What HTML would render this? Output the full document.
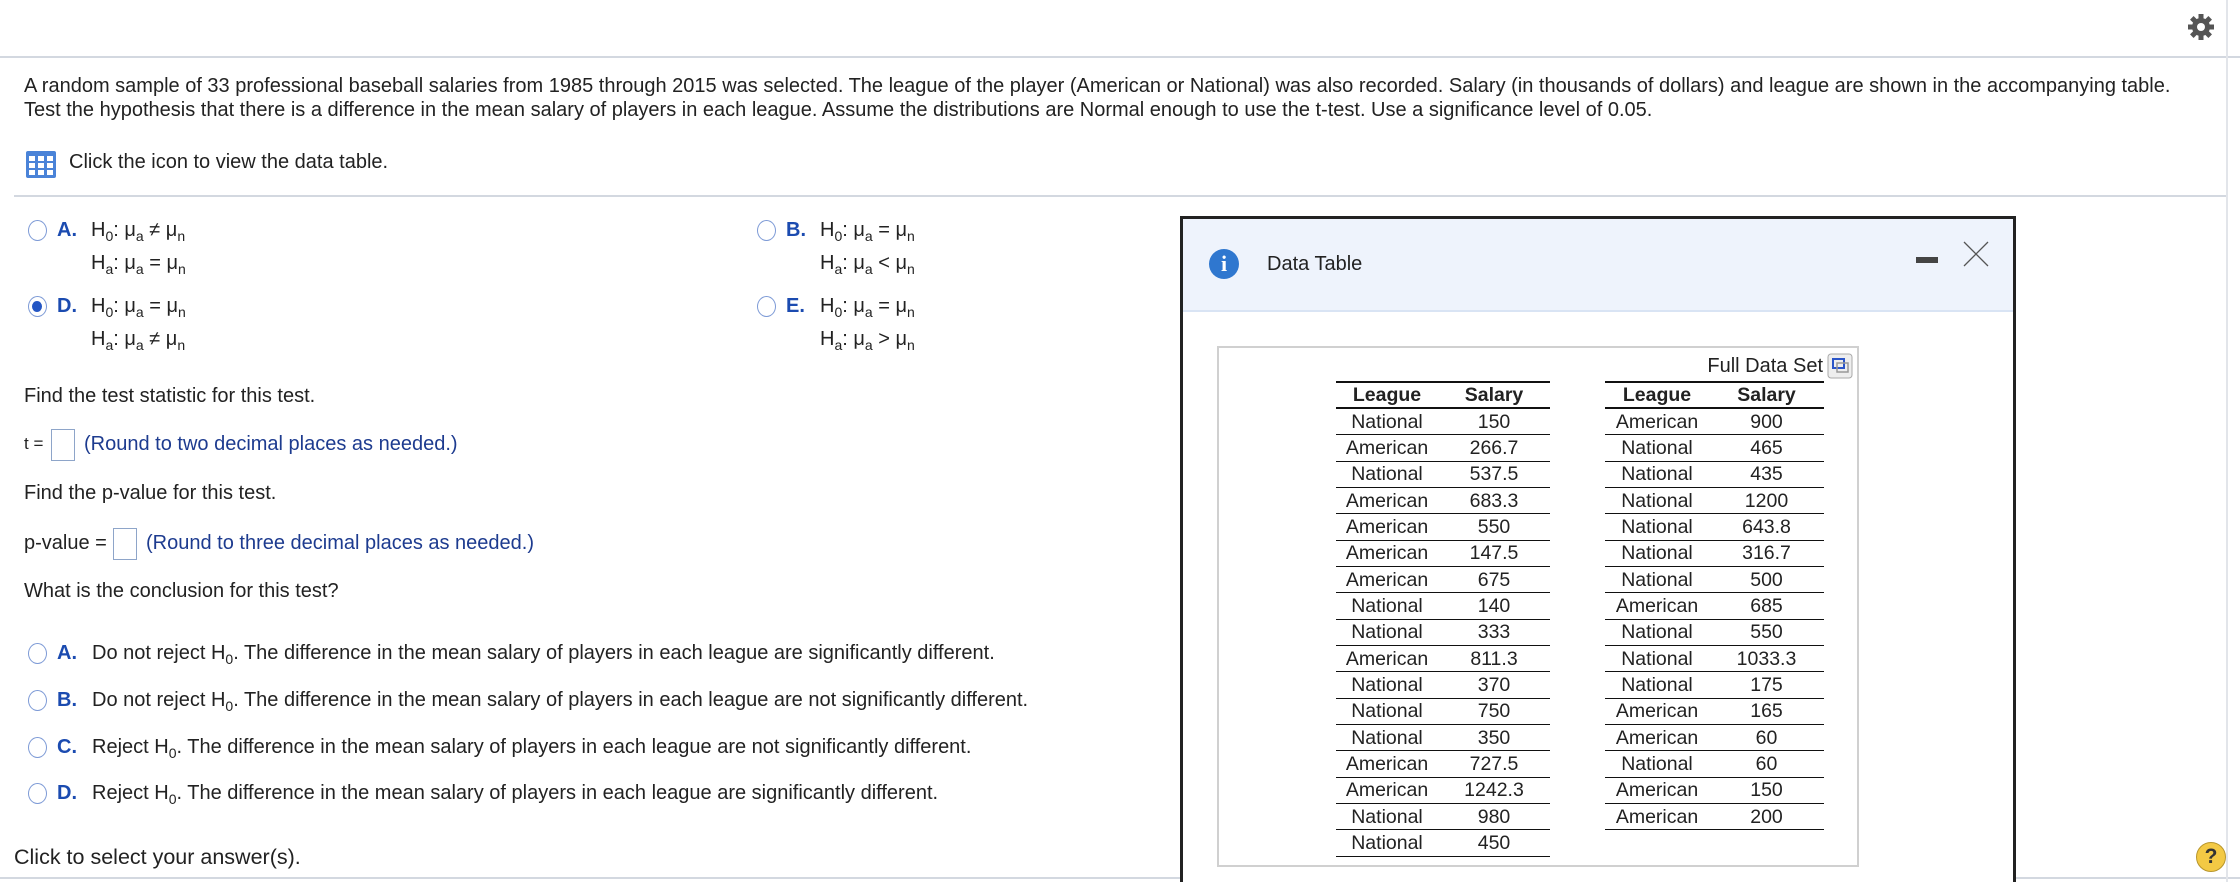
<!DOCTYPE html>
<html><head><meta charset="utf-8"><style>
*{margin:0;padding:0;box-sizing:border-box}
html{width:2240px;height:882px;overflow:hidden}
body{width:2240px;height:882px;overflow:hidden;background:#fff;font-family:"Liberation Sans",sans-serif;color:#222;position:relative}
.a{position:absolute;white-space:nowrap;font-size:20px;line-height:24px}
.hr{position:absolute;height:2px;background:#d3d8e0}
.r{position:absolute;width:19px;height:21px;border:1.5px solid #7d9ad6;border-radius:50%}
.r.sel::after{content:"";position:absolute;left:3px;top:3.5px;width:10px;height:11px;border-radius:50%;background:#2456c4}
.L{color:#1b4bb0;font-weight:bold}
sub{font-size:14px;vertical-align:-5px;line-height:0}
.hy{font-size:20px}
.blue{color:#1d3b8f}
.box{position:absolute;width:24px;height:32px;border:1.5px solid #8ea5c9}
table{position:absolute;border-collapse:collapse;font-size:19.5px;text-align:center}
td,th{height:26.35px;border-bottom:1.5px solid #111;padding:0;line-height:24px}
th{border-top:2px solid #111;border-bottom:2px solid #111;font-weight:bold}
</style></head><body>
<svg style="position:absolute;left:2186px;top:12px" width="30" height="30" viewBox="0 0 30 30"><g fill="#555"><circle cx="15" cy="15" r="9"/><rect x="12.5" y="2" width="5" height="26"/><rect x="2" y="12.5" width="26" height="5"/><rect x="12.5" y="2" width="5" height="26" transform="rotate(45 15 15)"/><rect x="12.5" y="2" width="5" height="26" transform="rotate(-45 15 15)"/></g><circle cx="15" cy="15" r="4" fill="#fff"/></svg>
<div class="hr" style="left:0;top:56px;width:2240px"></div>
<div class="a" style="left:24px;top:74px">A random sample of 33 professional baseball salaries from 1985 through 2015 was selected. The league of the player (American or National) was also recorded. Salary (in thousands of dollars) and league are shown in the accompanying table.</div>
<div class="a" style="left:24px;top:98px">Test the hypothesis that there is a difference in the mean salary of players in each league. Assume the distributions are Normal enough to use the t-test. Use a significance level of 0.05.</div>
<svg style="position:absolute;left:26px;top:151px" width="30" height="27" viewBox="0 0 30 27"><rect width="30" height="27" rx="2" fill="#4a83d8"/><g fill="#fff"><rect x="3" y="5" width="6" height="5"/><rect x="12" y="5" width="6" height="5"/><rect x="21" y="5" width="6" height="5"/><rect x="3" y="12" width="6" height="5"/><rect x="12" y="12" width="6" height="5"/><rect x="21" y="12" width="6" height="5"/><rect x="3" y="19" width="6" height="5"/><rect x="12" y="19" width="6" height="5"/><rect x="21" y="19" width="6" height="5"/></g></svg>
<div class="a" style="left:69px;top:150px">Click the icon to view the data table.</div>
<div class="hr" style="left:14px;top:195px;width:2212px"></div>

<div class="r" style="left:28px;top:220px"></div><div class="a L" style="left:57px;top:218px">A.</div>
<div class="a hy" style="left:91px;top:218px">H<sub>0</sub>: μ<sub>a</sub> ≠ μ<sub>n</sub></div>
<div class="a hy" style="left:91px;top:251px">H<sub>a</sub>: μ<sub>a</sub> = μ<sub>n</sub></div>
<div class="r sel" style="left:28px;top:296px"></div><div class="a L" style="left:57px;top:294px">D.</div>
<div class="a hy" style="left:91px;top:294px">H<sub>0</sub>: μ<sub>a</sub> = μ<sub>n</sub></div>
<div class="a hy" style="left:91px;top:327px">H<sub>a</sub>: μ<sub>a</sub> ≠ μ<sub>n</sub></div>
<div class="r" style="left:757px;top:220px"></div><div class="a L" style="left:786px;top:218px">B.</div>
<div class="a hy" style="left:820px;top:218px">H<sub>0</sub>: μ<sub>a</sub> = μ<sub>n</sub></div>
<div class="a hy" style="left:820px;top:251px">H<sub>a</sub>: μ<sub>a</sub> &lt; μ<sub>n</sub></div>
<div class="r" style="left:757px;top:296px"></div><div class="a L" style="left:786px;top:294px">E.</div>
<div class="a hy" style="left:820px;top:294px">H<sub>0</sub>: μ<sub>a</sub> = μ<sub>n</sub></div>
<div class="a hy" style="left:820px;top:327px">H<sub>a</sub>: μ<sub>a</sub> &gt; μ<sub>n</sub></div>

<div class="a" style="left:24px;top:384px">Find the test statistic for this test.</div>
<div class="a" style="left:24px;top:432px;font-size:17px">t =</div><div class="box" style="left:51px;top:429px"></div>
<div class="a blue" style="left:84px;top:432px">(Round to two decimal places as needed.)</div>
<div class="a" style="left:24px;top:481px">Find the p-value for this test.</div>
<div class="a" style="left:24px;top:531px">p-value =</div><div class="box" style="left:113px;top:528px"></div>
<div class="a blue" style="left:146px;top:531px">(Round to three decimal places as needed.)</div>
<div class="a" style="left:24px;top:579px">What is the conclusion for this test?</div>

<div class="r" style="left:28px;top:643px"></div><div class="a L" style="left:57px;top:641px">A.</div><div class="a" style="left:92px;top:641px">Do not reject H<sub>0</sub>. The difference in the mean salary of players in each league are significantly different.</div>
<div class="r" style="left:28px;top:690px"></div><div class="a L" style="left:57px;top:688px">B.</div><div class="a" style="left:92px;top:688px">Do not reject H<sub>0</sub>. The difference in the mean salary of players in each league are not significantly different.</div>
<div class="r" style="left:28px;top:737px"></div><div class="a L" style="left:57px;top:735px">C.</div><div class="a" style="left:92px;top:735px">Reject H<sub>0</sub>. The difference in the mean salary of players in each league are not significantly different.</div>
<div class="r" style="left:28px;top:783px"></div><div class="a L" style="left:57px;top:781px">D.</div><div class="a" style="left:92px;top:781px">Reject H<sub>0</sub>. The difference in the mean salary of players in each league are significantly different.</div>

<div class="a" style="left:14px;top:845px;font-size:21.5px">Click to select your answer(s).</div>
<div class="hr" style="left:0;top:877px;width:2240px"></div>
<div style="position:absolute;left:2226px;top:0;width:2px;height:882px;background:#e2e5ea"></div>
<div style="position:absolute;left:2196px;top:842px;width:30px;height:30px;border-radius:50%;background:#f3c944;border:1.5px solid #b8962c;text-align:center;font:bold 21px/28px 'Liberation Sans',sans-serif;color:#333">?</div>

<div style="position:absolute;left:1180px;top:216px;width:836px;height:666px;border:3px solid #222;border-bottom:none;background:#fff">
 <div style="position:absolute;left:0;top:0;width:830px;height:93px;background:#eef3fc;border-bottom:2px solid #d9e4f4"></div>
</div>
<div style="position:absolute;left:1209px;top:249px;width:30px;height:30px;border-radius:50%;background:#2f77cf;color:#fff;text-align:center;font:bold 22px/30px 'Liberation Serif',serif">i</div>
<div class="a" style="left:1267px;top:252px;font-size:20px">Data Table</div>
<div style="position:absolute;left:1916px;top:257px;width:22px;height:6px;background:#444"></div>
<svg style="position:absolute;left:1963px;top:241px" width="26" height="26"><path d="M1 1L25 25M25 1L1 25" stroke="#555" stroke-width="1.3"/></svg>
<div style="position:absolute;left:1217px;top:346px;width:642px;height:521px;border:2px solid #d0d0d0"></div>
<div class="a" style="left:1700px;top:354px;width:123px;text-align:right">Full Data Set</div>
<svg style="position:absolute;left:1827px;top:353px" width="26" height="26"><rect x="1" y="1" width="24" height="24" rx="3" fill="#eee" stroke="#aaa"/><rect x="6" y="6" width="11" height="9" fill="none" stroke="#2b55c8" stroke-width="2"/><rect x="10" y="10" width="11" height="9" fill="none" stroke="#999" stroke-width="1.5"/></svg>

<table style="left:1336px;top:381px;width:214px">
<tr><th style="width:102px">League</th><th>Salary</th></tr>
<tr><td>National</td><td>150</td></tr><tr><td>American</td><td>266.7</td></tr><tr><td>National</td><td>537.5</td></tr><tr><td>American</td><td>683.3</td></tr><tr><td>American</td><td>550</td></tr><tr><td>American</td><td>147.5</td></tr><tr><td>American</td><td>675</td></tr><tr><td>National</td><td>140</td></tr><tr><td>National</td><td>333</td></tr><tr><td>American</td><td>811.3</td></tr><tr><td>National</td><td>370</td></tr><tr><td>National</td><td>750</td></tr><tr><td>National</td><td>350</td></tr><tr><td>American</td><td>727.5</td></tr><tr><td>American</td><td>1242.3</td></tr><tr><td>National</td><td>980</td></tr><tr><td>National</td><td>450</td></tr>
</table>
<table style="left:1605px;top:381px;width:219px">
<tr><th style="width:104px">League</th><th>Salary</th></tr>
<tr><td>American</td><td>900</td></tr><tr><td>National</td><td>465</td></tr><tr><td>National</td><td>435</td></tr><tr><td>National</td><td>1200</td></tr><tr><td>National</td><td>643.8</td></tr><tr><td>National</td><td>316.7</td></tr><tr><td>National</td><td>500</td></tr><tr><td>American</td><td>685</td></tr><tr><td>National</td><td>550</td></tr><tr><td>National</td><td>1033.3</td></tr><tr><td>National</td><td>175</td></tr><tr><td>American</td><td>165</td></tr><tr><td>American</td><td>60</td></tr><tr><td>National</td><td>60</td></tr><tr><td>American</td><td>150</td></tr><tr><td>American</td><td>200</td></tr>
</table>
</body></html>
